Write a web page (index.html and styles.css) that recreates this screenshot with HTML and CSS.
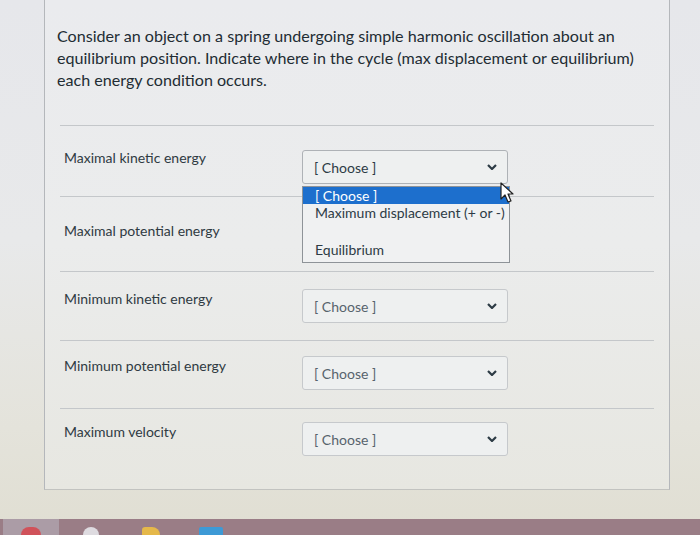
FILE: index.html
```html
<!DOCTYPE html>
<html>
<head>
<meta charset="utf-8">
<link rel="stylesheet" href="styles.css">
</head>
<body>
<div class="screen">
  <div class="card">
    <p class="question">Consider an object on a spring undergoing simple harmonic oscillation about an<br>equilibrium position. Indicate where in the cycle (max displacement or equilibrium)<br>each energy condition occurs.</p>
    <div class="rows">
      <div class="row">
        <div class="label">Maximal kinetic energy</div>
        <div class="select-wrap">
          <div class="select dark"><span>[ Choose ]</span><svg class="chev" viewBox="0 0 10 6" width="10" height="6"><path d="M1 1 L5 5 L9 1" fill="none" stroke="#2d3b45" stroke-width="2.2"/></svg></div>
          <div class="dropdown">
            <div class="opt hl">[ Choose ]</div>
            <div class="opt">Maximum displacement (+ or -)</div>
            <div class="opt gap"></div>
            <div class="opt">Equilibrium</div>
          </div>
          <svg class="cursor" viewBox="0 0 14 22" width="14" height="22"><path d="M1 1 L1 17 L5 13 L8 20 L11 19 L8 12 L13 12 Z" fill="#fff" stroke="#222" stroke-width="1.2" stroke-linejoin="round"/></svg>
        </div>
      </div>
      <div class="row">
        <div class="label">Maximal potential energy</div>
        <div class="select-wrap">
          <div class="select covered"><span>[ Choose ]</span><svg class="chev" viewBox="0 0 10 6" width="10" height="6"><path d="M1 1 L5 5 L9 1" fill="none" stroke="#2d3b45" stroke-width="2.2"/></svg></div>
        </div>
      </div>
      <div class="row">
        <div class="label">Minimum kinetic energy</div>
        <div class="select-wrap">
          <div class="select"><span>[ Choose ]</span><svg class="chev" viewBox="0 0 10 6" width="10" height="6"><path d="M1 1 L5 5 L9 1" fill="none" stroke="#2d3b45" stroke-width="2.2"/></svg></div>
        </div>
      </div>
      <div class="row">
        <div class="label">Minimum potential energy</div>
        <div class="select-wrap">
          <div class="select"><span>[ Choose ]</span><svg class="chev" viewBox="0 0 10 6" width="10" height="6"><path d="M1 1 L5 5 L9 1" fill="none" stroke="#2d3b45" stroke-width="2.2"/></svg></div>
        </div>
      </div>
      <div class="row">
        <div class="label">Maximum velocity</div>
        <div class="select-wrap">
          <div class="select"><span>[ Choose ]</span><svg class="chev" viewBox="0 0 10 6" width="10" height="6"><path d="M1 1 L5 5 L9 1" fill="none" stroke="#2d3b45" stroke-width="2.2"/></svg></div>
        </div>
      </div>
    </div>
  </div>
  <div class="spacer"></div>
  <div class="taskbar">
    <div class="tile active"><span class="ico red"></span></div>
    <div class="tile"><span class="ico white"></span></div>
    <div class="tile"><span class="ico yellow"></span></div>
    <div class="tile"><span class="ico blue"></span></div>
  </div>
</div>
</body>
</html>
```
FILE: styles.css
```css
html, body {
  margin: 0;
  padding: 0;
}
body {
  width: 700px;
  height: 535px;
  overflow: hidden;
  font-family: Lato, "Open Sans", sans-serif;
  color: #2d3b45;
  background: linear-gradient(180deg, #e6e7eb 0%, #e8e9ea 45%, #e4e3db 80%, #e0ded2 100%);
}
.screen {
  display: flex;
  flex-direction: column;
  height: 535px;
}
.card {
  margin-left: 44px;
  width: 626px;
  height: 490px;
  box-sizing: border-box;
  border-left: 1px solid #b4b7bb;
  border-right: 1px solid #b4b7bb;
  border-bottom: 1px solid #c2c3c0;
  background: linear-gradient(180deg, #eaebee 0%, #ebecec 50%, #e7e7e1 100%);
  padding: 0 15px 0 15px;
}
.question {
  margin: 0 0 0 -3px;
  padding-top: 25px;
  font-size: 16.1px;
  line-height: 22px;
  color: #222c33;
  white-space: nowrap;
}
.rows {
  margin-top: 34px;
}
.row {
  --pad: 24px;
  border-top: 1px solid #c4c7ca;
  height: 70px;
  display: flex;
  align-items: flex-start;
}
.row:nth-child(2) { height: 74px; }
.row:nth-child(3) { height: 68px; --pad: 17px; }
.row:nth-child(4) { height: 67px; --pad: 15px; }
.row:nth-child(5) { --pad: 13px; }
.label {
  width: 242px;
  box-sizing: border-box;
  padding: calc(var(--pad) + 1px) 0 0 4px;
  font-size: 14px;
  line-height: 17px;
  color: #2f3a42;
}
.row:first-child .label { padding-top: 23px; }
.select-wrap {
  position: relative;
  margin-top: var(--pad);
}
.select {
  width: 206px;
  height: 34px;
  box-sizing: border-box;
  border: 1px solid #c6c9cc;
  border-radius: 3px;
  background: #eef0f0;
  display: flex;
  align-items: center;
  justify-content: space-between;
  padding: 0 10px 0 11px;
  font-size: 14px;
  color: #57636c;
}
.select.dark {
  color: #2d3b45;
  border-color: #aeb2b6;
}
.select.covered {
  visibility: hidden;
}
.chev {
  display: block;
}
.dropdown {
  position: absolute;
  top: 36px;
  left: 0;
  width: 208px;
  height: 77px;
  box-sizing: border-box;
  border: 1px solid #8e9398;
  background: #f0f1f2;
  z-index: 5;
  font-size: 14px;
  color: #2d3b45;
}
.opt {
  height: 17px;
  line-height: 17px;
  padding-left: 12px;
  white-space: nowrap;
}
.opt.hl {
  background: #1d6fcd;
  color: #fff;
}
.opt.gap {
  height: 19px;
}
.opt + .opt:not(.gap) {
  height: 18px;
}
.cursor {
  position: absolute;
  left: 198px;
  top: 32px;
  z-index: 6;
}
.spacer {
  flex: 1;
}
.taskbar {
  height: 16px;
  background: #9a7d86;
  display: flex;
  gap: 4px;
  padding-left: 3px;
  align-items: flex-end;
  overflow: hidden;
}
.tile {
  width: 56px;
  height: 16px;
  display: flex;
  justify-content: center;
  align-items: flex-end;
}
.tile.active {
  background: #ab9ca6;
}
.ico {
  width: 20px;
  height: 8px;
  border-radius: 10px 10px 0 0;
}
.ico.red { background: #d0525a; }
.ico.white { background: #dedbe0; width: 16px; }
.ico.yellow { background: #e5b84a; width: 18px; border-radius: 4px 10px 0 0; }
.ico.blue { background: #3d9ad6; width: 24px; border-radius: 2px 2px 0 0; }
```
